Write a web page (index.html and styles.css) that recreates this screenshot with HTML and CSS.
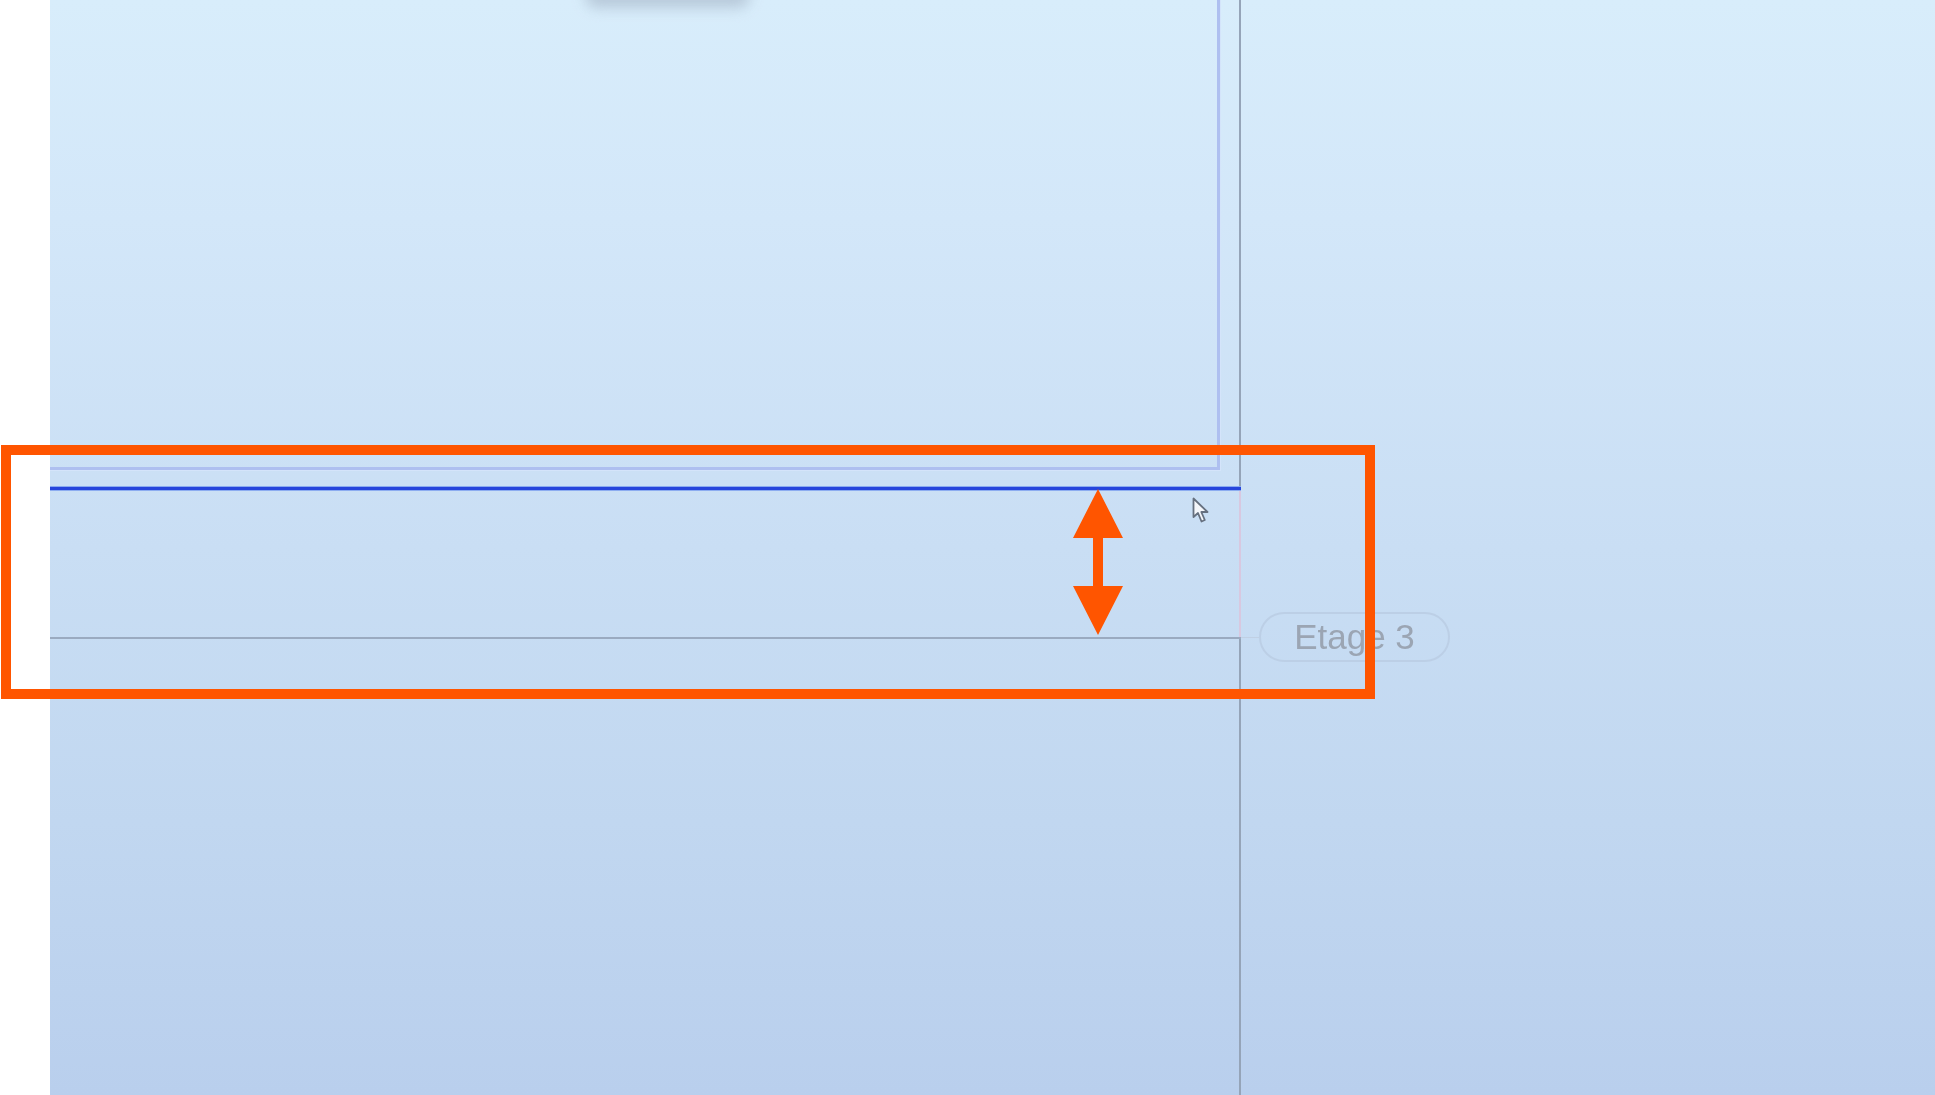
FILE: index.html
```html
<!DOCTYPE html>
<html>
<head>
<meta charset="utf-8">
<link rel="stylesheet" href="styles.css">
</head>
<body>
<div class="page">
  <div class="gutter"></div>
  <div class="canvas">
    <div class="blob"></div>
    <div class="frame"></div>
    <div class="vline"></div>
    <div class="vline-pink"></div>
    <div class="blue-line"></div>
    <div class="grey-line"></div>
    <div class="tick"></div>
    <div class="pill">Etage 3</div>
    <svg class="cursor" width="22" height="28" viewBox="0 0 22 28">
      <path d="M1.5 1.5 L1.5 20 L6 16 L9.5 24.5 L12.8 23 L9.3 15 L15.5 15 Z" fill="#f4f6fa" stroke="#66707f" stroke-width="1.8" stroke-linejoin="round"/>
    </svg>
  </div>
</div>
<div class="highlight"></div>
<svg class="arrow" width="52" height="148" viewBox="0 0 52 148">
  <polygon points="26,0 51,49 31,49 31,97 51,97 26,146 1,97 21,97 21,49 1,49" fill="#ff5500"/>
</svg>
</body>
</html>
```
FILE: styles.css
```css
html, body {
  margin: 0;
  padding: 0;
  height: 100%;
  overflow: hidden;
  background: #ffffff;
}
.page {
  display: flex;
  height: 1095px;
  width: 1935px;
}
.gutter {
  width: 50px;
  flex: none;
  background: #ffffff;
}
.canvas {
  position: relative;
  flex: 1;
  background: linear-gradient(180deg, #d8edfb 0%, #d3e7f9 20%, #c9def4 50%, #c1d7f0 75%, #b9cfed 100%);
  overflow: hidden;
}
.blob {
  position: absolute;
  left: 535px;
  top: -16px;
  width: 165px;
  height: 24px;
  border-radius: 12px;
  background: #b2c3d4;
  filter: blur(7px);
  opacity: 0.85;
}
.frame {
  position: absolute;
  left: -4px;
  top: -4px;
  width: 1171px;
  height: 471px;
  border-right: 3px solid #aebff0;
  border-bottom: 3px solid #aebff0;
  box-shadow: 1px 1px 0 #d4e4fa;
}
.vline {
  position: absolute;
  left: 1189px;
  top: 0;
  width: 2px;
  height: 100%;
  background: #95a4b8;
}
.vline-pink {
  position: absolute;
  left: 1189px;
  top: 491px;
  width: 2px;
  height: 146px;
  background: #d8c8e0;
}
.blue-line {
  position: absolute;
  left: 0;
  top: 487px;
  width: 1191px;
  height: 3px;
  background: #2645dc;
  box-shadow: 0 -1px 0 #8aabf0, 0 1px 0 #8cacf0;
}
.grey-line {
  position: absolute;
  left: 0;
  top: 637px;
  width: 1191px;
  height: 2px;
  background: #9aaac0;
}
.tick {
  position: absolute;
  left: 1191px;
  top: 637px;
  width: 18px;
  height: 1px;
  background: #c0d0e4;
}
.pill {
  position: absolute;
  left: 1209px;
  top: 612px;
  width: 191px;
  height: 50px;
  box-sizing: border-box;
  border: 2px solid #bccfe6;
  border-radius: 25px;
  font-family: "Liberation Sans", Arial, sans-serif;
  font-size: 35px;
  line-height: 46px;
  color: #9ba5b3;
  text-align: center;
  filter: blur(0.7px);
}
.cursor {
  position: absolute;
  left: 1142px;
  top: 497px;
}
.highlight {
  position: absolute;
  left: 1px;
  top: 445px;
  width: 1374px;
  height: 254px;
  box-sizing: border-box;
  border: 10px solid #ff5500;
}
.arrow {
  position: absolute;
  left: 1072px;
  top: 489px;
}
```
